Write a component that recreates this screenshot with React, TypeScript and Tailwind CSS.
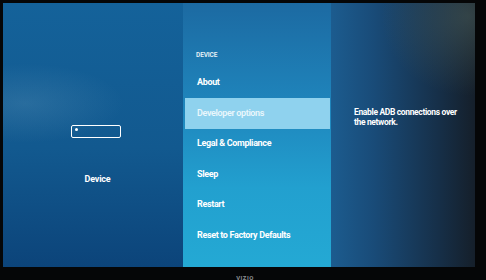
const menu = ['About', 'Developer options', 'Legal & Compliance', 'Sleep', 'Restart', 'Reset to Factory Defaults']
const selected = 1

export default function App() {
  return (
    <div className="w-[486px] h-[280px] bg-[#050607] flex flex-col overflow-hidden" style={{ fontFamily: 'Roboto, "Open Sans", sans-serif' }}>
      {/* screen */}
      <div className="mt-[3px] ml-[3px] w-[472px] h-[264px] flex">
        {/* left: category */}
        <div className="w-[180px] h-full flex flex-col items-center bg-[radial-gradient(ellipse_55%_15%_at_12%_38%,rgba(140,185,210,0.18),transparent),linear-gradient(180deg,#14629a_0%,#12598f_55%,#0c447a_100%)]">
          <div className="mt-[122px] ml-[6px] w-[50px] h-[13px] border-[1.5px] border-white rounded-[2px] relative">
            <span className="absolute left-[3px] top-[2px] w-[3px] h-[3px] rounded-full bg-white" />
          </div>
          <div className="mt-[35px] ml-[9px] text-[9px] font-bold tracking-[-0.2px] text-white">Device</div>
        </div>

        {/* middle: options list */}
        <div className="w-[148px] h-full pl-[2px] pr-[1px] flex flex-col bg-[linear-gradient(180deg,#1c6aa2_0%,#1f86bd_40%,#22a0cf_70%,#24a9d4_100%)]">
          <div className="mt-[48px] pl-[11px] text-[6.5px] font-semibold text-white/90 tracking-[-0.1px]">DEVICE</div>
          <div className="mt-[7px] flex flex-col">
            {menu.map((m, i) => (
              <div
                key={m}
                className={
                  i === selected
                    ? 'h-[30.5px] flex items-center pl-[12px] bg-[#8fd2ee] text-[#eaf7fc] text-[9px] font-semibold tracking-[-0.35px]'
                    : 'h-[30.5px] flex items-center pl-[12px] text-white text-[9px] font-bold tracking-[-0.35px]'
                }
              >
                {m}
              </div>
            ))}
          </div>
        </div>

        {/* right: description */}
        <div className="flex-1 h-full pl-[23px] pt-[105px] bg-[radial-gradient(ellipse_60%_30%_at_95%_5%,rgba(80,100,95,0.5),transparent),linear-gradient(90deg,#1c5c8f_0%,#194b78_30%,#162f48_75%,#151f2a_100%)]">
          <p className="w-[104px] text-[8.5px] leading-[9.5px] font-bold tracking-[-0.35px] text-white">
            Enable ADB connections over the network.
          </p>
        </div>
      </div>

      {/* bezel logo */}
      <div className="flex-1 flex items-end justify-center pl-[4px]">
        <span className="text-[6px] leading-[5px] font-bold tracking-[0.5px] text-[#8a8e92]">VIZIO</span>
      </div>
    </div>
  )
}
